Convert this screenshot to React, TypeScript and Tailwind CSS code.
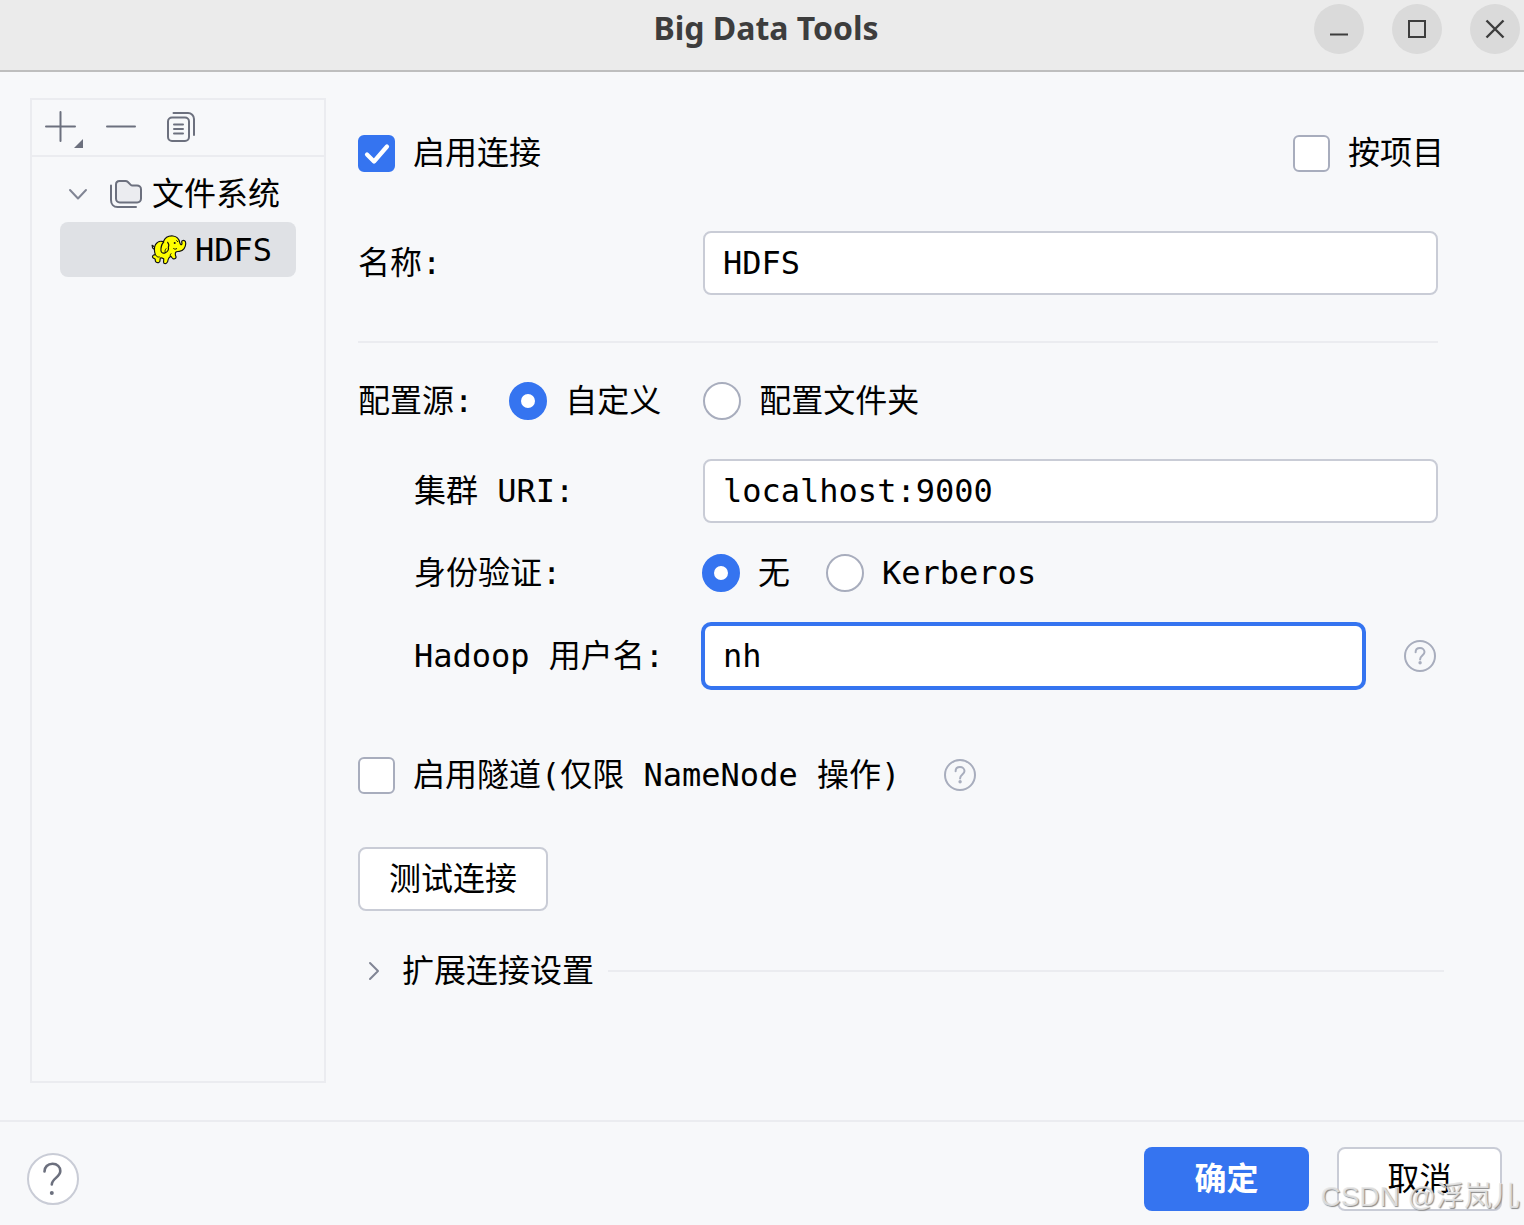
import { useState } from "react";
import type { InputHTMLAttributes, ReactNode } from "react";

const inputClass =
  "h-16 w-full min-w-0 flex-1 rounded-lg border-2 bg-white px-[18px] text-black outline-none";

function CheckField({ label, defaultChecked }: { label: string; defaultChecked?: boolean }) {
  return (
    <label className="flex h-10 items-center gap-[18px] whitespace-nowrap">
      <span className="grid">
        <input
          type="checkbox"
          defaultChecked={defaultChecked}
          className="peer col-start-1 row-start-1 size-[37px] appearance-none rounded-md border-2 border-[#a8adbd] bg-white checked:border-[#3574f0] checked:bg-[#3574f0]"
        />
        <svg
          viewBox="0 0 37 37"
          fill="none"
          className="pointer-events-none invisible col-start-1 row-start-1 size-[37px] peer-checked:visible"
        >
          <path
            d="M9 19.5L16 26.5L29 11.5"
            stroke="white"
            strokeWidth="4.2"
            strokeLinecap="round"
            strokeLinejoin="round"
          />
        </svg>
      </span>
      <span>{label}</span>
    </label>
  );
}

type RadioProps = InputHTMLAttributes<HTMLInputElement> & { label: string };

function RadioField({ label, ...props }: RadioProps) {
  return (
    <label className="flex h-10 items-center gap-[18px] whitespace-nowrap">
      <input
        type="radio"
        className="size-[38px] appearance-none rounded-full border-2 border-[#a8adbd] bg-white checked:border-[12px] checked:border-[#3574f0]"
        {...props}
      />
      <span>{label}</span>
    </label>
  );
}

function HelpIcon() {
  return (
    <button aria-label="帮助" className="shrink-0">
      <svg viewBox="0 0 32 32" fill="none" stroke="#a8adbd" className="size-8">
        <circle cx="16" cy="16" r="15" strokeWidth="2" />
        <path
          d="M11.6 12.2C11.6 9.6 13.5 8 16 8s4.5 1.7 4.5 4c0 3.4-4.4 3.8-4.4 7.4"
          strokeWidth="2"
          strokeLinecap="round"
        />
        <circle cx="16.1" cy="22.8" r="1.7" fill="#a8adbd" stroke="none" />
      </svg>
    </button>
  );
}

function WindowButton({ name, children }: { name: string; children: ReactNode }) {
  return (
    <button
      aria-label={name}
      className="flex size-[50px] items-center justify-center rounded-full bg-[#dadada]"
    >
      <svg viewBox="0 0 20 20" fill="none" stroke="#3d3d3d" strokeWidth="2" className="size-5">
        {children}
      </svg>
    </button>
  );
}

function Elephant() {
  return (
    <svg viewBox="0 0 108 90" className="h-[30px] w-9" strokeLinejoin="round" strokeLinecap="round">
      {/* tail */}
      <path d="M12 42C6 43 3 38 4 31M3 31l5 3" fill="none" stroke="#111" strokeWidth="3.5" />
      {/* body, head and raised trunk */}
      <path
        d="M14 28C19 20 29 17 37 20C42 8 54 2 66 3C77 4 84 12 86 22C88 30 92 31 93 26C93 21 90 19 94 17C99 15 104 18 104 24C105 36 97 48 85 49C80 50 76 49 74 52C72 57 73 61 75 65C76 70 71 73 66 71C63 69 62 66 59 64C55 67 52 70 51 75C51 82 45 88 39 85C36 82 39 77 38 71C34 69 31 68 28 69C26 74 29 80 24 82C18 84 12 81 13 75C14 71 8 71 5 67C3 62 8 59 13 59C10 50 9 37 14 28Z"
        fill="#ffff00"
        stroke="#111"
        strokeWidth="3.5"
      />
      {/* ear */}
      <path
        d="M38 21C32 28 29 38 30 48C31 54 38 56 43 53C50 50 54 45 52 36C55 31 53 26 50 22"
        fill="#ffff00"
        stroke="#111"
        strokeWidth="3.5"
      />
      <path d="M43 53C41 49 42 44 45 41" fill="none" stroke="#111" strokeWidth="3" />
      {/* eye, brow and mouth */}
      <circle cx="71" cy="24" r="3" fill="#111" />
      <path d="M77 17l3 3M68 41C71 43 74 43 77 41" fill="none" stroke="#111" strokeWidth="3" />
      <path d="M14 60C16 65 20 67 25 66M58 64C57 60 58 58 60 56" fill="none" stroke="#111" strokeWidth="3" />
    </svg>
  );
}

function Sidebar() {
  const [open, setOpen] = useState(true);

  return (
    <aside className="w-[296px] shrink-0 border-2 border-[#ebecf0]">
      <div className="flex h-[57px] items-center border-b-2 border-[#ebecf0] pl-3">
        <button aria-label="添加" className="mr-[22px]">
          <svg viewBox="0 0 40 40" fill="none" stroke="#6c707e" strokeWidth="2" className="size-10">
            <path d="M16.5 4v29M2 18.5h29" strokeLinecap="round" />
            <path d="M39 31v9h-9z" fill="#6c707e" stroke="none" />
          </svg>
        </button>
        <button aria-label="移除" className="mr-[30px]">
          <svg viewBox="0 0 30 30" fill="none" stroke="#6c707e" strokeWidth="2" className="size-[30px]">
            <path d="M1 13.5h28" strokeLinecap="round" />
          </svg>
        </button>
        <button aria-label="复制">
          <svg viewBox="0 0 30 32" fill="none" stroke="#6c707e" strokeWidth="2" className="h-8 w-[30px]">
            <rect x="2" y="5.5" width="21" height="23.5" rx="4" />
            <path d="M7.5 1H22c3.3 0 6 2.7 6 6v16" strokeLinecap="round" />
            <path d="M8 12.5h9M8 17h9M8 21.5h9" strokeLinecap="round" />
          </svg>
        </button>
      </div>

      <div className="px-7 pt-[9px]">
        <button
          onClick={() => setOpen(!open)}
          className="flex h-[55px] w-full items-center pl-2 whitespace-nowrap"
        >
          <svg viewBox="0 0 20 20" fill="none" stroke="#818594" strokeWidth="2" className="mr-[22px] size-5">
            <path d="M2 6l8 8.5L18 6" strokeLinecap="round" strokeLinejoin="round" />
          </svg>
          <svg viewBox="0 0 32 30" fill="none" stroke="#6c707e" strokeWidth="2" className="mr-[10px] h-[30px] w-8">
            <path
              d="M6 5.5C6 3.6 7.300 2 9.500 2h6c1 0 1.700.3 2.400 1l2.600 2.600c.6.600 1.200.9 2 .9H27c2.200 0 4 1.500 4 3.700v9.300c0 2.200-1.600 4-3.800 4H9.800C7.600 23.500 6 21.700 6 19.500z"
              fill="#ebecf0"
            />
            <path d="M1 6.5V21c0 4 2.6 7 6.5 7H26" strokeLinecap="round" />
          </svg>
          文件系统
        </button>
        {open && (
          <div className="mt-px flex h-[55px] items-center gap-2 rounded-lg bg-[#dfe1e5] pl-[91px]">
            <Elephant />
            HDFS
          </div>
        )}
      </div>
    </aside>
  );
}

export default function App() {
  return (
    <div className="relative flex min-h-screen flex-col bg-[#f7f8fa] font-['DejaVu_Sans_Mono','Noto_Sans_CJK_SC',monospace] text-[32px] leading-10 text-black">
      <header className="grid h-[72px] grid-cols-[1fr_auto_1fr] items-start border-b-2 border-[#bebebe] bg-[#ebebeb] pt-1 pr-1 pl-3">
        <h1 className="col-start-2 font-['Noto_Sans',sans-serif] text-[32px] leading-[48px] font-bold text-[#3d3d3d]">
          Big Data Tools
        </h1>
        <div className="flex justify-end gap-7">
          <WindowButton name="最小化">
            <path d="M1 15.5h18" />
          </WindowButton>
          <WindowButton name="最大化">
            <path d="M2 2h16v16H2z" />
          </WindowButton>
          <WindowButton name="关闭">
            <path d="M1.5 1.5l17 17M18.5 1.5l-17 17" strokeWidth="2.4" />
          </WindowButton>
        </div>
      </header>

      <main className="flex flex-1 pt-[26px] pr-20 pb-[37px] pl-[30px]">
        <Sidebar />

        <form className="ml-8 min-w-0 flex-1 pt-[35px]" onSubmit={(e) => e.preventDefault()}>
          <div className="flex justify-between">
            <CheckField label="启用连接" defaultChecked />
            <CheckField label="按项目" />
          </div>

          <div className="mt-[58px] flex items-center pr-[6px]">
            <label htmlFor="name" className="w-[345px] shrink-0">
              名称:
            </label>
            <input id="name" defaultValue="HDFS" className={`${inputClass} border-[#c9ccd6]`} />
          </div>

          <hr className="mt-[46px] mr-[6px] border-t-2 border-[#ebecf0]" />

          <div className="mt-[38px] flex items-center" role="radiogroup" aria-labelledby="source">
            <span id="source" className="mr-9">
              配置源:
            </span>
            <div className="flex gap-[42px]">
              <RadioField label="自定义" name="source" defaultChecked />
              <RadioField label="配置文件夹" name="source" />
            </div>
          </div>

          <div className="pl-14">
            <div className="mt-[38px] flex items-center pr-[6px]">
              <label htmlFor="uri" className="w-[289px] shrink-0">
                集群 URI:
              </label>
              <input id="uri" defaultValue="localhost:9000" className={`${inputClass} border-[#c9ccd6]`} />
            </div>

            <div className="mt-[30px] flex items-center" role="radiogroup" aria-labelledby="auth">
              <span id="auth" className="w-[288px] shrink-0">
                身份验证:
              </span>
              <div className="flex gap-9">
                <RadioField label="无" name="auth" defaultChecked />
                <RadioField label="Kerberos" name="auth" />
              </div>
            </div>

            <div className="mt-[31px] flex items-center pr-2">
              <label htmlFor="user" className="w-[289px] shrink-0">
                Hadoop 用户名:
              </label>
              <input
                id="user"
                defaultValue="nh"
                className={`${inputClass} mr-10 border-[#3574f0] ring-2 ring-[#3574f0]`}
              />
              <HelpIcon />
            </div>
          </div>

          <div className="mt-[67px] flex items-center gap-11">
            <CheckField label="启用隧道(仅限 NameNode 操作)" />
            <HelpIcon />
          </div>

          <button className="mt-[52px] block h-16 rounded-lg border-2 border-[#c9ccd6] bg-white px-[29px]">
            测试连接
          </button>

          <div className="mt-10 flex items-center gap-[14px] pl-2">
            <button className="flex items-center gap-5 whitespace-nowrap">
              <svg viewBox="0 0 16 20" fill="none" stroke="#818594" strokeWidth="2" className="h-5 w-4">
                <path d="M4 2l8 8-8 8" strokeLinecap="round" strokeLinejoin="round" />
              </svg>
              扩展连接设置
            </button>
            <hr className="flex-1 border-t-2 border-[#ebecf0]" />
          </div>
        </form>
      </main>

      <footer className="flex items-center gap-7 border-t-2 border-[#ebecf0] pt-[25px] pr-[22px] pb-[14px] pl-[27px]">
        <button
          aria-label="帮助"
          className="mr-auto flex size-[52px] items-center justify-center rounded-full border-2 border-[#c9ccd6] bg-white"
        >
          <svg viewBox="0 0 20 34" fill="none" stroke="#6c707e" className="h-[34px] w-5">
            <path
              d="M1.5 9.5C1.5 5 4.7 1.8 9.5 1.8s7.8 3 7.8 7.2c0 6.200-8.500 7.500-8.500 13.500"
              strokeWidth="2.6"
              strokeLinecap="round"
            />
            <circle cx="8.8" cy="31" r="2" fill="#6c707e" stroke="none" />
          </svg>
        </button>
        <button className="h-16 w-[165px] rounded-lg bg-[#3574f0] font-bold text-white">确定</button>
        <button className="h-16 w-[165px] rounded-lg border-2 border-[#c9ccd6] bg-white">取消</button>
      </footer>

      <div className="pointer-events-none absolute right-1 bottom-2 font-['Liberation_Sans','Noto_Sans_CJK_SC',sans-serif] text-[28px] leading-10 text-[#e6e6e6]/85 [text-shadow:1px_1px_1px_#8a8a8a]">
        CSDN @浮岚儿
      </div>
    </div>
  );
}
